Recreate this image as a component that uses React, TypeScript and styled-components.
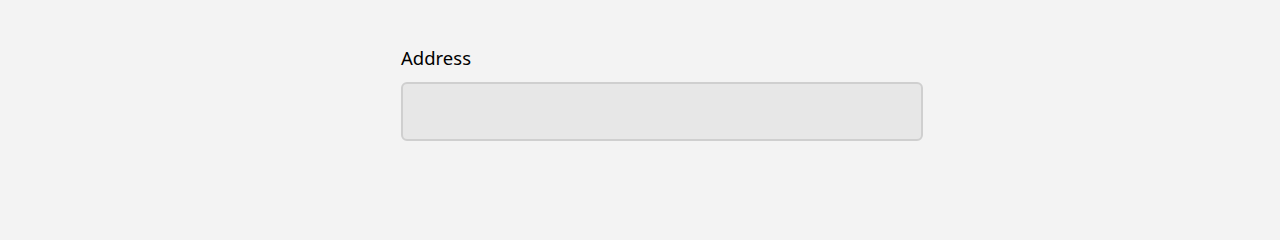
import React from "react";
import styled, { createGlobalStyle } from "styled-components";

const Global = createGlobalStyle`
  html, body { margin: 0; padding: 0; background: #f3f3f3; }
  body { font-family: "Noto Sans", "Open Sans", sans-serif; }
`;

const Page = styled.div`
  height: 205px;
  box-sizing: border-box;
  padding: 45px 0 0 401px;
  background: #f3f3f3;
`;

const Field = styled.div`
  display: flex;
  flex-direction: column;
  gap: 11px;
  width: 522px;
`;

const Label = styled.label`
  font-size: 18.5px;
  line-height: 26px;
  color: #000;
  font-weight: 400;
`;

const Input = styled.input`
  box-sizing: border-box;
  width: 522px;
  height: 59px;
  background: #e7e7e7;
  border: 2px solid #cfcfcf;
  border-radius: 6px;
  outline: none;
  font: inherit;
  padding: 0 14px;
`;

export default function App() {
  return (
    <>
      <Global />
      <Page>
        <Field>
          <Label htmlFor="address">Address</Label>
          <Input id="address" type="text" />
        </Field>
      </Page>
    </>
  );
}
